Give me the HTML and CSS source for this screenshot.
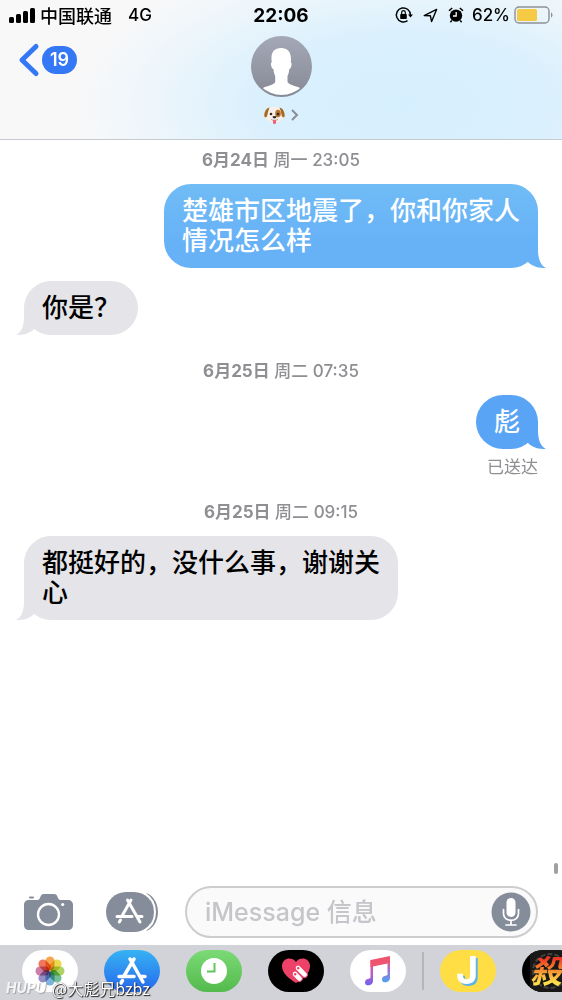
FILE: index.html
```html
<!DOCTYPE html>
<html lang="zh-CN">
<head>
    <meta charset="UTF-8">
    <meta name="viewport" content="width=device-width, initial-scale=1.0">
    <title>iMessage 信息</title>
    <link rel="stylesheet" href="styles.css">
</head>
<body>

<div class="phone">
    <header class="header">
        <!-- Status bar -->
        <div class="status-bar">
            <div class="status-left">
                <svg class="signal" width="26" height="16" viewBox="0 0 26 16">
                    <rect x="0" y="10" width="5" height="6" rx="1.5"/>
                    <rect x="7" y="7" width="5" height="9" rx="1.5"/>
                    <rect x="14" y="4" width="5" height="12" rx="1.5"/>
                    <rect x="21" y="1" width="5" height="15" rx="1.5"/>
                </svg>
                <span class="carrier">中国联通</span>
                <span>4G</span>
            </div>
            <div class="clock">22:06</div>
            <div class="status-right">
                <svg width="18" height="18" viewBox="0 0 18 18" fill="none" stroke="#000" stroke-width="1.5">
                    <path d="M12.5 14.6A7 7 0 1 1 15.4 9"/>
                    <path d="M13 8.5h5l-2.5 3z" fill="#000" stroke="none"/>
                    <rect x="5.2" y="8" width="6.6" height="5" rx=".8" fill="#000" stroke="none"/>
                    <path d="M6.7 8.5V6.4a1.8 1.8 0 0 1 3.6 0v2.1" stroke-width="1.2"/>
                </svg>
                <svg class="location" width="15" height="15" viewBox="0 0 15 15" fill="none" stroke="#000" stroke-width="1.4" stroke-linejoin="round">
                    <path d="M1.2 7.6 13.6 1.4 8.6 13.6 7.4 7.8z"/>
                </svg>
                <svg class="alarm" width="16" height="16" viewBox="0 0 16 16">
                    <circle cx="8" cy="8.6" r="6.2"/>
                    <path d="M1 3.8 4.2 1M15 3.8 11.8 1M3.8 13.4l-1.4 1.8M12.2 13.4l1.4 1.8" stroke="#000" stroke-width="1.5"/>
                    <path d="M8.2 5v4H5" fill="none" stroke="#fff" stroke-width="1.3"/>
                </svg>
                <span>62%</span>
                <svg width="39" height="18" viewBox="0 0 39 18">
                    <rect x="1" y="1" width="34" height="16" rx="4" fill="none" stroke="#8e9197" stroke-width="1.4"/>
                    <rect x="3" y="3" width="20" height="12" rx="1.5" fill="#f7ca45"/>
                    <path d="M37 6.5c2 .5 2 4.5 0 5z" fill="#8e9197"/>
                </svg>
            </div>
        </div>

        <!-- Navigation -->
        <div class="nav">
            <button class="back" type="button" aria-label="返回">
                <svg width="20" height="34" viewBox="0 0 20 34" fill="none" stroke="#3478f6" stroke-width="5" stroke-linecap="round" stroke-linejoin="round">
                    <path d="M17 3.5 3 17l14 13.5"/>
                </svg>
                <span class="badge">19</span>
            </button>
            <button class="contact" type="button" aria-label="联系人">
                <svg width="61" height="61" viewBox="0 0 61 61">
                    <defs>
                        <linearGradient id="avatarBg" x1="0" y1="0" x2="0" y2="1">
                            <stop offset="0" stop-color="#a5a8b6"/>
                            <stop offset="1" stop-color="#868995"/>
                        </linearGradient>
                        <clipPath id="avatarClip"><circle cx="30.5" cy="30.5" r="28.5"/></clipPath>
                    </defs>
                    <circle cx="30.5" cy="30.5" r="30.5" fill="url(#avatarBg)"/>
                    <path clip-path="url(#avatarClip)" fill="#fff" d="M30 12c-6.500 0-10 4-9.500 11.500l.2 3c-1.300.3-.8 2.500-.3 4 .4 1.500 1 2.500 2 2.600.3 3 .9 5 1.800 7v6c-1 3-9 4-13.700 6.500v9h40v-9C45.500 50.100 38 49.100 36.500 46.100v-6c1.100-2 1.500-4 1.800-7 1.200-.2 1.700-1.500 2-3 .4-1.600.5-3.300-.5-3.600l.2-3c.2-7.500-3.500-11.500-10-11.500z"/>
                </svg>
                <span class="contact-name">
                    <svg width="21" height="20" viewBox="0 0 21 20" role="img" aria-label="小狗">
                        <path d="M4 4C6 1 15 1 17 4c1.500 3 2.500 7 1.500 10-2 4.500-14 4.500-16 0C1.500 11 2.500 7 4 4z" fill="#f6f0e8"/>
                        <path d="M5.500 2.500C2 3 0 8 .3 11c.4 2 2.500 1.500 3-.5.500-3 1.200-5.500 2.200-8z" fill="#a9681f"/>
                        <path d="M15.500 2.500c3.500.5 5.500 5.500 5.200 8.500-.4 2-2.500 1.500-3-.5-.5-3-1.200-5.500-2.200-8z" fill="#a9681f"/>
                        <ellipse cx="14" cy="8.500" rx="2.800" ry="3.800" fill="#b5732e"/>
                        <circle cx="7" cy="9" r="1.300" fill="#352821"/>
                        <circle cx="14" cy="9" r="1.300" fill="#352821"/>
                        <path d="M8.500 11.500c1-.8 3-.8 4 0 0 1.300-1.200 2-2 2s-2-.7-2-2z" fill="#2e2523"/>
                        <path d="M7 14.500c2 1 5 1 7 0" fill="none" stroke="#9b7d66" stroke-width=".7"/>
                        <path d="M9 15h3v2.500c0 2-3 2-3 0z" fill="#ef607d"/>
                    </svg>
                    <svg width="8" height="12" viewBox="0 0 8 12" fill="none" stroke="#8a8d97" stroke-width="2">
                        <path d="m1 1 5 5-5 5"/>
                    </svg>
                </span>
            </button>
        </div>
    </header>

    <!-- Messages -->
    <main class="messages">
        <div class="date"><b>6月24日</b> 周一 23:05</div>
        <div class="bubble sent">楚雄市区地震了，你和你家人情况怎么样</div>
        <div class="bubble received">你是？</div>

        <div class="date date-next"><b>6月25日</b> 周二 07:35</div>
        <div class="bubble sent sent-short">彪</div>
        <div class="delivered">已送达</div>

        <div class="date date-next"><b>6月25日</b> 周二 09:15</div>
        <div class="bubble received">都挺好的，没什么事，谢谢关心</div>
        <div class="scrollbar"></div>
    </main>

    <!-- Message input -->
    <form class="compose">
        <button class="icon-btn" type="button" aria-label="相机">
            <svg width="49" height="38" viewBox="0 0 49 38">
                <path fill="#868d9a" d="M5 7h8.500c1.500 0 2-1 2.600-2.500C17 2 18 1 20 1h10c2 0 3 1 3.800 3.500C34.400 6 35 7 36.500 7H44c3 0 5 2 5 5v20c0 3-2 5-5 5H5c-3 0-5-2-5-5V12c0-3 2-5 5-5z"/>
                <rect x="5" y="3.500" width="5" height="2" rx="1" fill="#868d9a"/>
                <circle cx="24.500" cy="21.500" r="10.500" fill="none" stroke="#fff" stroke-width="2.300"/>
                <circle cx="38.700" cy="11.500" r="1.600" fill="#fff"/>
            </svg>
        </button>
        <button class="icon-btn apps-btn" type="button" aria-label="应用">
            <svg width="53" height="40" viewBox="0 0 53 40">
                <path d="M40 1c7 2 12 10 12 19s-5 17-12 19c4-5 7-11 7-19S44 6 40 1z" fill="#868d9a"/>
                <rect x="0" y="0" width="48" height="40" rx="20" fill="#868d9a"/>
                <path d="M38 1c7 4 11 11 11 19s-4 15-11 19" fill="none" stroke="#fff" stroke-width="2"/>
                <g fill="none" stroke="#fff" stroke-width="3" stroke-linecap="round">
                    <path d="m25 8-9 16M21.500 8l12.500 22M11 24.500h15M31 24.500h5M14.500 28l-1.200 2"/>
                </g>
            </svg>
        </button>
        <div class="message-field">
            <input type="text" placeholder="iMessage 信息" aria-label="iMessage 信息">
            <button class="icon-btn" type="button" aria-label="语音">
                <svg width="40" height="40" viewBox="0 0 40 40">
                    <circle cx="20" cy="20" r="19.500" fill="#868d9a"/>
                    <rect x="15.500" y="6" width="9" height="19" rx="4.500" fill="#fff"/>
                    <path d="M12.500 17.500v4c0 9 15 9 15 0v-4M20 28v5M15 33h10" fill="none" stroke="#fff" stroke-width="1.700" stroke-linecap="round"/>
                </svg>
            </button>
        </div>
    </form>

    <!-- App drawer -->
    <nav class="dock">
        <button class="app photos" type="button" aria-label="照片">
            <svg width="30" height="30" viewBox="-15 -15 30 30">
                <g class="petals">
                    <rect x="-4.500" y="-14.500" width="9" height="14" rx="4.500" fill="#f59c3a"/>
                    <rect x="-4.500" y="-14.500" width="9" height="14" rx="4.500" fill="#e8d63c" transform="rotate(45)"/>
                    <rect x="-4.500" y="-14.500" width="9" height="14" rx="4.500" fill="#a5cf52" transform="rotate(90)"/>
                    <rect x="-4.500" y="-14.500" width="9" height="14" rx="4.500" fill="#63b88b" transform="rotate(135)"/>
                    <rect x="-4.500" y="-14.500" width="9" height="14" rx="4.500" fill="#6facd8" transform="rotate(180)"/>
                    <rect x="-4.500" y="-14.500" width="9" height="14" rx="4.500" fill="#8981bf" transform="rotate(225)"/>
                    <rect x="-4.500" y="-14.500" width="9" height="14" rx="4.500" fill="#c7719f" transform="rotate(270)"/>
                    <rect x="-4.500" y="-14.500" width="9" height="14" rx="4.500" fill="#ec6a4c" transform="rotate(315)"/>
                </g>
            </svg>
        </button>
        <button class="app store" type="button" aria-label="App Store">
            <svg width="32" height="30" viewBox="0 0 32 30" fill="none" stroke="#fff" stroke-width="3.500" stroke-linecap="round">
                <path d="M18 3 8 20M14 3l13 23M3 20.500h15M24 20.500h5M6.500 24.500 5 27"/>
            </svg>
        </button>
        <button class="app recent" type="button" aria-label="最近">
            <svg width="28" height="28" viewBox="0 0 28 28">
                <circle cx="14" cy="14" r="13" fill="#fff"/>
                <path d="M14.500 6v8.500H7" fill="none" stroke="#61c55b" stroke-width="2"/>
            </svg>
        </button>
        <button class="app touch" type="button" aria-label="Digital Touch">
            <svg width="30" height="28" viewBox="0 0 30 28">
                <path d="M15 26C9 22 1 17 1 9c0-8 10-10 14-4 4-6 14-4 14 4 0 8-8 13-14 17z" fill="#ee4168"/>
                <g fill="#fff" stroke="#ee4168">
                    <rect x="-2.800" y="-2.800" width="5.600" height="12" rx="2.800" transform="translate(14 17) rotate(-45)"/>
                    <rect x="-2.800" y="-2.800" width="5.600" height="15" rx="2.800" transform="translate(17 11) rotate(-45)"/>
                </g>
                <circle cx="14.200" cy="17.200" r="1.200" fill="#ee4168"/>
                <circle cx="17.200" cy="11.200" r="1.200" fill="#ee4168"/>
            </svg>
        </button>
        <button class="app music" type="button" aria-label="音乐">
            <svg width="28" height="32" viewBox="0 0 28 32">
                <defs>
                    <linearGradient id="noteLeft" x1="0" y1="0" x2="0" y2="1">
                        <stop offset="0" stop-color="#f3536b"/>
                        <stop offset=".5" stop-color="#c45bc4"/>
                        <stop offset="1" stop-color="#6a63f0"/>
                    </linearGradient>
                    <linearGradient id="noteRight" x1="0" y1="0" x2="0" y2="1">
                        <stop offset="0" stop-color="#f0526f"/>
                        <stop offset=".5" stop-color="#a96ed0"/>
                        <stop offset="1" stop-color="#4aa5f5"/>
                    </linearGradient>
                </defs>
                <path d="M9 5v21c0 5-8 6-8 1.500 0-3.500 3.500-3.500 5.500-4.500V5z" fill="url(#noteLeft)"/>
                <path d="M26 2v21c0 5-8 6-8 1.500 0-3.500 3.500-3.500 5.500-4.500V2z" fill="url(#noteRight)"/>
                <path d="M6.500 5 26 1v7L6.500 12z" fill="#ee5470"/>
            </svg>
        </button>
        <span class="divider"></span>
        <button class="app jike" type="button" aria-label="即刻">
            <svg width="34" height="42" viewBox="0 0 34 42">
                <text class="jike-letter" x="7" y="36" fill="#5bb5ea">J</text>
                <text class="jike-letter" x="5" y="34" fill="#fff">J</text>
            </svg>
        </button>
        <button class="app game" type="button" aria-label="杀">
            <svg width="56" height="42" viewBox="0 0 56 42">
                <defs>
                    <linearGradient id="fire" x1="0" y1="0" x2="0" y2="1">
                        <stop offset=".25" stop-color="#ee3124"/>
                        <stop offset=".5" stop-color="#f5852e"/>
                        <stop offset=".8" stop-color="#ffe04a"/>
                    </linearGradient>
                    <clipPath id="gameClip"><rect width="56" height="42" rx="21"/></clipPath>
                </defs>
                <g clip-path="url(#gameClip)">
                    <rect x="8" width="48" height="42" fill="#191816"/>
                    <circle cx="28" cy="21" r="17" fill="none" stroke="#44423f" stroke-width="2" stroke-dasharray="5 2"/>
                </g>
                <text class="game-letter" x="8" y="33" fill="url(#fire)">殺</text>
            </svg>
        </button>
    </nav>

    <div class="watermark"><i>HUPU</i><span>@大彪兄bzbz</span></div>
</div>

</body>
</html>
```

FILE: styles.css
```css
* {
    box-sizing: border-box;
}
body {
    margin: 0;
    font-family: Inter, "Noto Sans CJK SC", sans-serif;
    color: #000;
    background: #fff;
}
button {
    padding: 0;
    border: 0;
    background: none;
    font-family: inherit;
    cursor: pointer;
}
svg {
    display: block;
    flex-shrink: 0;
    overflow: visible;
}
.phone {
    position: relative;
    display: flex;
    flex-direction: column;
    min-height: 100vh;
    overflow: hidden;
}

/* Header */
.header {
    height: 140px;
    border-bottom: 1px solid #c5cbd0;
    background: radial-gradient(ellipse 58% 110% at 72% 75%, #d6effe 0%, #daf0fd 45%, #ebf5fb 75%, #f8f8f9 100%);
}
.status-bar {
    display: grid;
    grid-template-columns: 1fr auto 1fr;
    align-items: center;
    height: 30px;
    padding: 0 9px;
    font-size: 17px;
    font-weight: 500;
}
.status-left,
.status-right {
    display: flex;
    align-items: center;
}
.carrier {
    margin: 0 16px 0 5px;
    font-size: 18px;
}
.clock {
    font-size: 19px;
    font-weight: 700;
}
.status-right {
    justify-content: flex-end;
    gap: 4px;
}
.location {
    margin: 0 6px;
}
.alarm {
    margin: 0 4px 0 0;
}
.nav {
    display: grid;
    grid-template-columns: 1fr auto 1fr;
    align-items: start;
    padding: 6px 19px 0;
}
.back {
    display: flex;
    align-items: center;
    gap: 3px;
    justify-self: start;
    padding-top: 7px;
}
.badge {
    padding: 0 8px;
    border-radius: 14px;
    background: #3478f6;
    color: #fff;
    font-size: 18px;
    font-weight: 600;
    line-height: 28px;
}
.contact {
    display: flex;
    flex-direction: column;
    align-items: center;
    gap: 8px;
}
.contact-name {
    display: flex;
    align-items: center;
    gap: 6px;
}

/* Messages */
.messages {
    position: relative;
    display: flex;
    flex: 1;
    flex-direction: column;
    align-items: flex-start;
    padding: 10px 24px;
}
.date {
    align-self: center;
    margin-bottom: 14px;
    color: #8e8e93;
    font-size: 17px;
    font-weight: 500;
    line-height: 20px;
}
.date-next {
    margin-top: 13px;
}
.bubble {
    position: relative;
    max-width: 374px;
    margin-bottom: 13px;
    padding: 12px 18px;
    border-radius: 27px;
    font-size: 26px;
    font-weight: 500;
    line-height: 30px;
}
.bubble::after {
    content: "";
    position: absolute;
    bottom: 0;
    width: 22px;
    height: 28px;
    clip-path: path("M8 0H14V10C14 19 17 26 22 28C15 28 9 27 4 22Z");
}
.sent {
    align-self: flex-end;
    background: linear-gradient(#70bcf5, #67b1f7 70%);
    color: #fff;
}
.sent::after {
    right: -8px;
    background: #67b1f7;
}
.sent-short {
    margin-bottom: 8px;
    background: #5aa4f6;
}
.sent-short::after {
    background: #5aa4f6;
}
.received {
    background: #e4e4e9;
}
.received::after {
    left: -8px;
    background: #e4e4e9;
    transform: scaleX(-1);
}
.delivered {
    align-self: flex-end;
    margin-bottom: 12px;
    color: #8e8e93;
    font-size: 17px;
    line-height: 20px;
}
.scrollbar {
    position: absolute;
    right: 4px;
    bottom: 3px;
    width: 4px;
    height: 11px;
    border-radius: 2px;
    background: #a0a0a2;
}

/* Message input */
.compose {
    display: flex;
    align-items: center;
    padding: 9px 24px 7px;
}
.apps-btn {
    margin: 0 26px 0 33px;
}
.message-field {
    display: flex;
    flex: 1;
    align-items: center;
    min-width: 0;
    height: 52px;
    padding: 0 5px 0 18px;
    border: 2px solid #cdcdd0;
    border-radius: 26px;
    background: #fafafa;
}
.message-field input {
    flex: 1;
    min-width: 0;
    padding: 0;
    border: 0;
    outline: 0;
    background: none;
    font-family: inherit;
    font-size: 25px;
    font-weight: 500;
}
.message-field input::placeholder {
    color: #c5c5ca;
    opacity: 1;
}

/* App drawer */
.dock {
    display: flex;
    align-items: flex-start;
    gap: 26px;
    height: 55px;
    padding: 5px 0 0 22px;
    background: #d1d3d9;
}
.app {
    display: flex;
    flex-shrink: 0;
    align-items: center;
    justify-content: center;
    width: 56px;
    height: 42px;
    border-radius: 21px;
    background: #fff;
}
.petals rect {
    mix-blend-mode: multiply;
    opacity: 0.9;
}
.store {
    background: linear-gradient(#36b3f3, #2667ed);
}
.recent {
    background: linear-gradient(#7bda76, #54ba4d);
}
.touch,
.game {
    background: #000;
}
.jike {
    background: #fedd45;
}
.divider {
    flex-shrink: 0;
    width: 2px;
    height: 38px;
    margin: 2px -10px 0;
    background: #b4b6bb;
}
.jike-letter {
    font-size: 38px;
    font-weight: 700;
}
.game-letter {
    font-family: "Noto Sans CJK TC", sans-serif;
    font-size: 32px;
    font-style: italic;
    font-weight: 700;
}

/* Watermark */
.watermark {
    position: absolute;
    bottom: 2px;
    left: 6px;
    display: flex;
    align-items: center;
    gap: 6px;
    color: #fff;
    font-family: "Noto Sans CJK SC", sans-serif;
    font-size: 16px;
    line-height: 20px;
    text-shadow: 1px 1px 1px #222, 0 0 1px #222;
    pointer-events: none;
}
.watermark i {
    font-family: Inter, sans-serif;
    font-size: 14px;
    font-weight: 700;
    opacity: 0.8;
    text-shadow: 1px 1px 1px #999;
}
```
